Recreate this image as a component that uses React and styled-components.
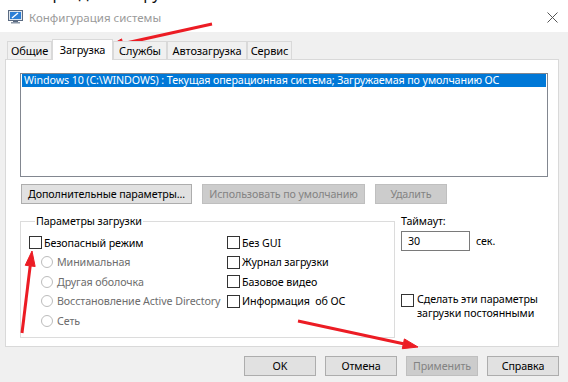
import React from 'react'
import styled, { createGlobalStyle } from 'styled-components'

const GlobalStyle = createGlobalStyle`
  html, body {
    margin: 0;
    padding: 0;
  }
  body {
    width: 568px;
    height: 382px;
    overflow: hidden;
    background: #f0f0f0;
    font-family: "Noto Sans", "Open Sans", sans-serif;
    font-size: 10.7px;
    letter-spacing: -0.1px;
    color: #000;
  }
`

// Window shell
const Window = styled.div`
  position: relative;
  width: 568px;
  height: 382px;
  display: flex;
  flex-direction: column;
  background: #f0f0f0;
  overflow: hidden;
`

const PageClip = styled.div`
  flex: none;
  height: 4px;
  background: #fff;
  overflow: hidden;
`

const PageText = styled.div`
  margin-top: -16px;
  font-size: 16px;
  line-height: 19px;
  white-space: nowrap;
  color: #111;
`

const TitleBar = styled.div`
  flex: none;
  height: 28px;
  display: flex;
  align-items: center;
  padding: 0 10px 2px 8px;
  box-sizing: border-box;
  background: #fff;
`

const Title = styled.span`
  margin-left: 6px;
  flex: 1;
  font-size: 11.5px;
  letter-spacing: 0;
  color: #9a9a9a;
`

const Body = styled.div`
  flex: 1;
  display: flex;
  flex-direction: column;
  padding: 7px 9px 0 5px;
`

// Tabs
const Tabs = styled.div`
  position: relative;
  z-index: 1;
  display: flex;
  align-items: flex-end;
  height: 21px;
  margin-bottom: -1px;
  padding-left: 2px;
`

const Tab = styled.div`
  width: ${p => p.$w}px;
  height: ${p => (p.$active ? 21 : 18)}px;
  margin-bottom: ${p => (p.$active ? 0 : 1)}px;
  box-sizing: border-box;
  display: flex;
  align-items: center;
  justify-content: center;
  padding-bottom: ${p => (p.$active ? 2 : 0)}px;
  border: 1px solid #d9d9d9;
  border-bottom: none;
  background: ${p => (p.$active ? '#fff' : '#f0f0f0')};
  font-size: 11px;
`

const Panel = styled.div`
  height: 288px;
  box-sizing: border-box;
  border: 1px solid #d9d9d9;
  background: #fff;
  padding: 13px 0 0 14px;
`

// Boot list
const ListBox = styled.div`
  width: 528px;
  height: 104px;
  box-sizing: border-box;
  border: 1px solid #828790;
  padding: 0 1px;
`

const ListItem = styled.div`
  height: 13px;
  line-height: 13px;
  padding-left: 2px;
  white-space: nowrap;
  background: #0078d7;
  color: #fff;
`

const ButtonRow = styled.div`
  display: flex;
  gap: 10px;
  margin: 7px 0 0 1px;
`

const Button = styled.div`
  width: ${p => p.$w}px;
  height: 20px;
  box-sizing: border-box;
  display: flex;
  align-items: center;
  justify-content: center;
  border: 1px solid ${p => (p.$disabled ? '#bfbfbf' : '#adadad')};
  background: ${p => (p.$disabled ? '#cccccc' : '#e1e1e1')};
  color: ${p => (p.$disabled ? '#838383' : '#000')};
  white-space: nowrap;
`

// Boot options
const Lower = styled.div`
  display: flex;
  gap: 6px;
  margin-top: 9px;
`

const Group = styled.fieldset`
  width: 375px;
  height: 125px;
  box-sizing: border-box;
  margin: 0;
  padding: 4px 0 0 8px;
  border: 1px solid #dcdcdc;
  min-inline-size: 0;
`

const Legend = styled.legend`
  margin-left: 6px;
  padding: 0 1px;
  line-height: 16px;
`

const GroupGrid = styled.div`
  display: grid;
  grid-template-columns: 198px 1fr;
`

const Column = styled.div`
  display: flex;
  flex-direction: column;
`

const Row = styled.div`
  display: flex;
  align-items: center;
  height: 19.5px;
  gap: ${p => (p.$radio ? 4 : 2)}px;
  padding-left: ${p => (p.$indent ? 12 : 0)}px;
  white-space: nowrap;
  color: ${p => (p.$disabled ? '#6d6d6d' : '#000')};
`

const Check = styled.span`
  width: 13px;
  height: 13px;
  box-sizing: border-box;
  flex: none;
  border: 1px solid #333;
  background: #fff;
`

const Radio = styled.span`
  width: 12px;
  height: 12px;
  box-sizing: border-box;
  flex: none;
  border: 1px solid #bcbcbc;
  border-radius: 50%;
  background: #fff;
`

const Side = styled.div`
  display: flex;
  flex-direction: column;
`

const SideLabel = styled.div`
  line-height: 16px;
`

const TimeoutRow = styled.div`
  display: flex;
  align-items: center;
  gap: 6px;
  margin-top: 2px;
`

const Input = styled.div`
  width: 69px;
  height: 20px;
  box-sizing: border-box;
  border: 1px solid #7a7a7a;
  padding-left: 6px;
  line-height: 18px;
  background: #fff;
`

const Persist = styled.div`
  display: flex;
  align-items: flex-start;
  gap: 3px;
  margin-top: 41px;
  line-height: 14px;
  ${Check} {
    margin-top: 2px;
  }
`

const Footer = styled.div`
  display: flex;
  justify-content: flex-end;
  gap: 9px;
  margin-top: 9px;
`

const Arrows = styled.svg`
  position: absolute;
  left: 0;
  top: 0;
  pointer-events: none;
`

const AppIcon = () => (
  <svg width="15" height="14" viewBox="0 0 15 14">
    <rect x="0.5" y="0.5" width="14" height="10" fill="#dfe6ee" stroke="#5b6b82" />
    <rect x="2" y="2" width="11" height="7" fill="#2d7fd6" />
    <path d="M4 8 L10 3" stroke="#fff" strokeWidth="1.3" />
    <rect x="5" y="11" width="5" height="1" fill="#5b6b82" />
    <rect x="3" y="12" width="9" height="1.5" fill="#8b97a8" />
  </svg>
)

const CloseIcon = () => (
  <svg width="11" height="11" viewBox="0 0 11 11">
    <path d="M0.5 0.5 L10.5 10.5 M10.5 0.5 L0.5 10.5" stroke="#555" strokeWidth="1" />
  </svg>
)

const Arrow = ({ x1, y1, x2, y2 }) => {
  const dx = x2 - x1
  const dy = y2 - y1
  const len = Math.hypot(dx, dy)
  const ux = dx / len
  const uy = dy / len
  const bx = x2 - ux * 15
  const by = y2 - uy * 15
  const px = -uy * 5
  const py = ux * 5
  return (
    <g fill="#ec1c24" stroke="#ec1c24">
      <line x1={x1} y1={y1} x2={bx} y2={by} strokeWidth="3" />
      <polygon
        points={`${x2},${y2} ${bx + px},${by + py} ${bx - px},${by - py}`}
        strokeWidth="1"
      />
    </g>
  )
}

const tabs = [
  { label: 'Общие', w: 45 },
  { label: 'Загрузка', w: 61, active: true },
  { label: 'Службы', w: 54 },
  { label: 'Автозагрузка', w: 80 },
  { label: 'Сервис', w: 45 },
]

const App = () => (
  <>
    <GlobalStyle />
    <Window>
      <PageClip>
        <PageText>ните в раздел «Загрузка» и</PageText>
      </PageClip>
      <TitleBar>
        <AppIcon />
        <Title>Конфигурация системы</Title>
        <CloseIcon />
      </TitleBar>
      <Body>
        <Tabs>
          {tabs.map(t => (
            <Tab key={t.label} $w={t.w} $active={t.active}>
              {t.label}
            </Tab>
          ))}
        </Tabs>
        <Panel>
          <ListBox>
            <ListItem>
              Windows 10 (C:\WINDOWS) : Текущая операционная система; Загружаемая по умолчанию ОС
            </ListItem>
          </ListBox>
          <ButtonRow>
            <Button $w={171}>Дополнительные параметры...</Button>
            <Button $w={163} $disabled>Использовать по умолчанию</Button>
            <Button $w={72} $disabled>Удалить</Button>
          </ButtonRow>
          <Lower>
            <Group>
              <Legend>Параметры загрузки</Legend>
              <GroupGrid>
                <Column>
                  <Row>
                    <Check />
                    Безопасный режим
                  </Row>
                  <Row $indent $radio $disabled>
                    <Radio />
                    Минимальная
                  </Row>
                  <Row $indent $radio $disabled>
                    <Radio />
                    Другая оболочка
                  </Row>
                  <Row $indent $radio $disabled>
                    <Radio />
                    Восстановление Active Directory
                  </Row>
                  <Row $indent $radio $disabled>
                    <Radio />
                    Сеть
                  </Row>
                </Column>
                <Column>
                  <Row>
                    <Check />
                    Без GUI
                  </Row>
                  <Row>
                    <Check />
                    Журнал загрузки
                  </Row>
                  <Row>
                    <Check />
                    Базовое видео
                  </Row>
                  <Row>
                    <Check />
                    Информация&nbsp; об ОС
                  </Row>
                </Column>
              </GroupGrid>
            </Group>
            <Side>
              <SideLabel>Таймаут:</SideLabel>
              <TimeoutRow>
                <Input>30</Input>
                сек.
              </TimeoutRow>
              <Persist>
                <Check />
                <span>
                  Сделать эти параметры
                  <br />
                  загрузки постоянными
                </span>
              </Persist>
            </Side>
          </Lower>
        </Panel>
        <Footer>
          <Button $w={72}>OK</Button>
          <Button $w={72}>Отмена</Button>
          <Button $w={72} $disabled>Применить</Button>
          <Button $w={72}>Справка</Button>
        </Footer>
      </Body>
      <Arrows width="568" height="382" viewBox="0 0 568 382">
        <Arrow x1={212} y1={24} x2={108} y2={47} />
        <Arrow x1={22} y1={333} x2={32} y2={251} />
        <Arrow x1={298} y1={321} x2={418} y2={347} />
      </Arrows>
    </Window>
  </>
)

export default App
